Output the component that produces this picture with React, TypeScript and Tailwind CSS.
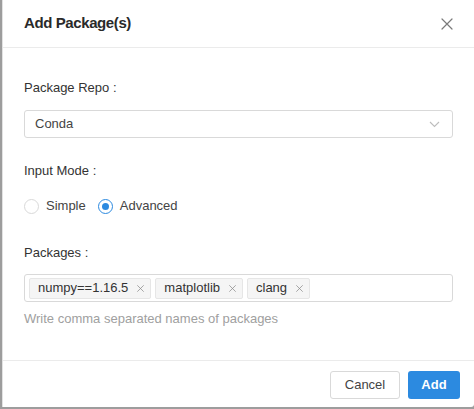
import React from "react";

function XIcon({ size = 12, className = "", sw = 1.2 }: { size?: number; className?: string; sw?: number }) {
  return (
    <svg width={size} height={size} viewBox="0 0 12 12" className={className} fill="none" stroke="currentColor" strokeWidth={sw} strokeLinecap="round">
      <path d="M1 1L11 11M11 1L1 11" />
    </svg>
  );
}

function Tag({ label }: { label: string }) {
  return (
    <div className="flex h-[21px] items-center gap-[9px] rounded-[2px] border border-[#e6e6e6] bg-[#f5f5f5] pl-[8px] pr-[6px] text-[13px] text-[#333]">
      <span>{label}</span>
      <XIcon size={7} sw={1.3} className="text-[#8c8c8c]" />
    </div>
  );
}

export default function App() {
  return (
    <div className="flex h-[409px] w-[474px] bg-[#9d9d9d]" style={{ fontFamily: "'Liberation Sans', Arial, sans-serif" }}>
      <div className="ml-[2px] flex h-[407px] flex-1 flex-col rounded-br-[3px] border-l border-[#e2e2e2] bg-white">
        <div className="flex h-[48px] shrink-0 items-center justify-between border-b border-[#ebebeb] pl-[21px] pr-[21px]">
          <span className="text-[15px] font-bold tracking-[-0.4px] text-[#2a2a2a]">Add Package(s)</span>
          <XIcon size={12} className="text-[#7a7a7a]" />
        </div>
        <div className="flex flex-1 flex-col px-[21px] pt-[30px]">
          <div className="text-[13px] leading-[20px] text-[#333]">Package Repo :</div>
          <div className="mt-[12px] flex h-[28px] items-center justify-between rounded-[3px] border border-[#d9d9d9] pl-[10px] pr-[12px] text-[13px] text-[#444]">
            <span>Conda</span>
            <svg width="11" height="7" viewBox="0 0 11 7" fill="none" stroke="#bdbdbd" strokeWidth="1.1">
              <path d="M1 1L5.5 5.5L10 1" />
            </svg>
          </div>
          <div className="mt-[23px] text-[13px] leading-[20px] text-[#333]">Input Mode :</div>
          <div className="mt-[15px] flex h-[20px] items-center text-[13px] text-[#444]">
            <span className="box-border h-[15px] w-[15px] rounded-full border border-[#d9d9d9] bg-white" />
            <span className="ml-[7px]">Simple</span>
            <span className="ml-[12px] box-border flex h-[15px] w-[15px] items-center justify-center rounded-full border border-[#2c8ae0] bg-white">
              <span className="h-[7px] w-[7px] rounded-full bg-[#2c8ae0]" />
            </span>
            <span className="ml-[7px]">Advanced</span>
          </div>
          <div className="mt-[27px] text-[13px] leading-[20px] text-[#333]">Packages :</div>
          <div className="mt-[11px] flex h-[28px] items-center gap-[4px] rounded-[3px] border border-[#d9d9d9] px-[4px]">
            <Tag label="numpy==1.16.5" />
            <Tag label="matplotlib" />
            <Tag label="clang" />
          </div>
          <div className="mt-[7px] text-[13px] leading-[20px] text-[#a0a0a0]">Write comma separated names of packages</div>
        </div>
        <div className="flex h-[47px] shrink-0 items-start justify-end gap-[8px] border-t border-[#ebebeb] pr-[14px] pt-[10px]">
          <button className="h-[28px] w-[70px] rounded-[3px] border border-[#d9d9d9] bg-white text-[13px] text-[#444]">Cancel</button>
          <button className="h-[28px] w-[52px] rounded-[3px] bg-[#2c8ae0] text-[13px] font-bold text-white">Add</button>
        </div>
      </div>
    </div>
  );
}
